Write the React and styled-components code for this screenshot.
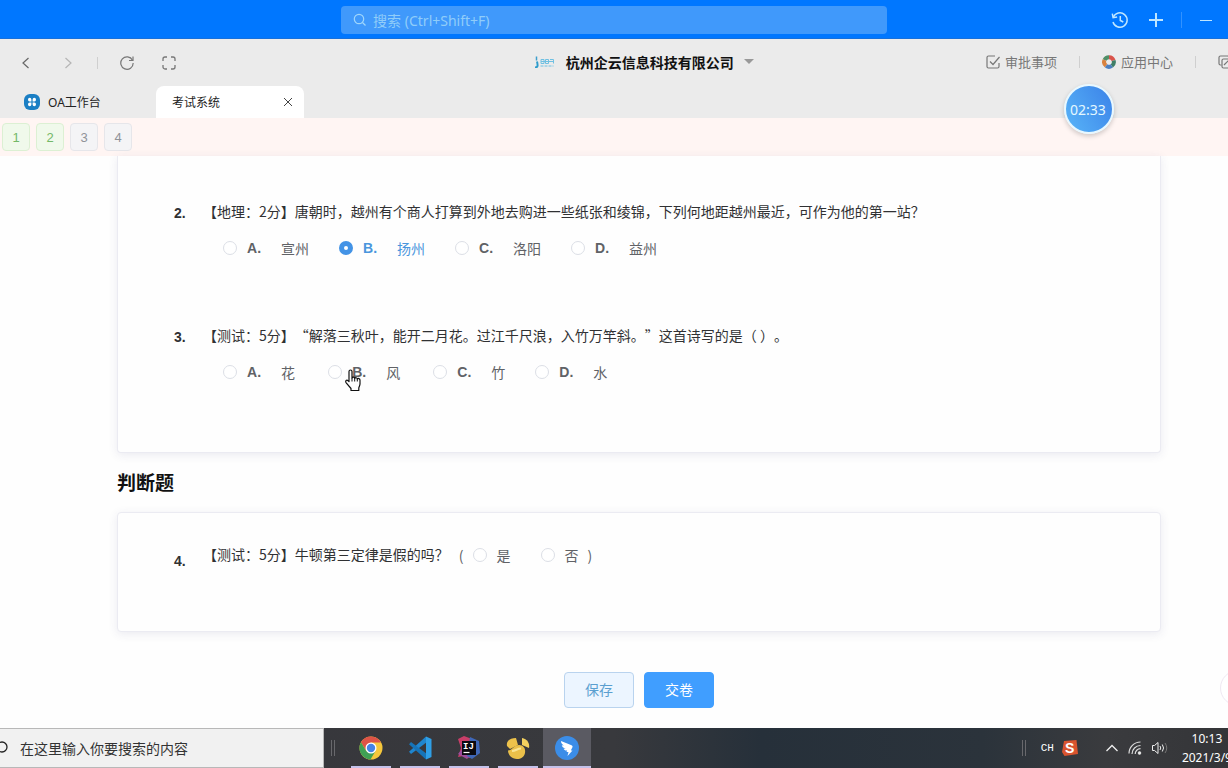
import React, { useState } from "react";
import styled, { createGlobalStyle } from "styled-components";

const singleQuestions = [
  {
    id: 2,
    title: "【地理：2分】唐朝时，越州有个商人打算到外地去购进一些纸张和绫锦，下列何地距越州最近，可作为他的第一站？",
    options: ["宣州", "扬州", "洛阳", "益州"],
  },
  {
    id: 3,
    title: "【测试：5分】“解落三秋叶，能开二月花。过江千尺浪，入竹万竿斜。”这首诗写的是（ ）。",
    options: ["花 ", "风 ", "竹", "水"],
    pointer: 1,
  },
];

const judgeQuestion = {
  id: 4,
  title: "【测试：5分】牛顿第三定律是假的吗？",
  options: ["是", "否"],
};

const letters = ["A", "B", "C", "D"];

const HandPointer = () => (
  <Pointer width="18" height="24" viewBox="0 0 18 24" aria-hidden="true">
    <path
      d="M5 2.500c0-2 3-2 3 0V9c.4-1.300 2.700-1 2.700.4.500-1.200 2.600-.8 2.600.6.700-1 2.700-.5 2.700 1.200V15c0 1.500-1 2.500-1.200 4v2.500H7V19.500L2 13.600c-1-1.700.6-3.100 2-1.900l1 1z"
      fill="#fff"
      stroke="#111"
      strokeWidth="1.200"
      strokeLinejoin="round"
    />
    <path d="M8 9v3.500M10.700 9.500v3M13.300 10v2.500" stroke="#111" />
  </Pointer>
);

const Chrome = () => (
  <svg width="24" height="24" viewBox="0 0 24 24">
    <circle cx="12" cy="12" r="11.500" fill="#f5c73c" />
    <path d="M2 6.200A11.500 11.500 0 0 1 22 6.500H12L7 14.500z" fill="#dd5347" />
    <path d="M2 6.200 7.200 15 12 17.300 16.500 15 11.500 23.500A11.500 11.500 0 0 1 2 6.200z" fill="#3fa055" />
    <circle cx="12" cy="12" r="5.500" fill="#fff" />
    <circle cx="12" cy="12" r="4.200" fill="#4583e6" />
  </svg>
);

const VsCode = () => (
  <svg width="24" height="24" viewBox="0 0 24 24">
    <path d="M18 .5 23.500 3v18L18 23.500z" fill="#2f9fe6" />
    <path d="M18 .5 1 15.800l2 2.200L18 6.800z" fill="#1f86cf" />
    <path d="M18 23.500 1 8.200 3 6l15 11.200z" fill="#1674b8" />
  </svg>
);

const Idea = () => (
  <svg width="24" height="24" viewBox="0 0 24 24">
    <path d="M1 3 7 0l8 3-2 19-7-2-5 1 3-9z" fill="#c93e68" />
    <path d="M1 18l5-6 7 8-3 3z" fill="#9a4c9c" />
    <path d="M13 1l9 4 1 12-8 6-5-3z" fill="#3f67b8" />
    <rect x="5" y="5" width="14" height="14" fill="#0b0a10" />
    <text x="6" y="13" fill="#fff" fontSize="9" fontWeight="700" fontFamily="Liberation Mono, monospace">
      IJ
    </text>
    <path d="M6.500 16.500h6" stroke="#fff" strokeWidth="1.200" />
  </svg>
);

const Navicat = () => (
  <svg width="24" height="24" viewBox="0 0 24 24">
    <path d="M1 10C0 5 4 2 10 2l2 7-8 4z" fill="#edc24b" />
    <path d="M16 2c5 1 8 5 7 10l-7-3z" fill="#f4d25f" />
    <path d="M2 14.500c4 0 6-5.500 11-5.500 4 0 7 3 6 8-1 4-4 6-8 6-5 0-9-4-9-8.500z" fill="#eac04a" />
    <path d="M6 15c4 0 5-2.500 9-2.500" stroke="#fae594" strokeWidth="2" fill="none" />
  </svg>
);

const DingTalk = () => (
  <svg width="24" height="24" viewBox="0 0 24 24">
    <circle cx="12" cy="12" r="12" fill="#3b8de8" />
    <path d="M6 5l10.500 4.200c1.200.5 1.300 1.400.8 2.400l-1.500 3h1.700L12.500 20l1-4h-2l.7-1.500c-2 .2-3-.5-3.600-1.800l2.100-.1C8.300 11.800 7 10.700 6.800 9.300l2 .2C7 8.300 6 7 6 5z" fill="#fff" />
  </svg>
);

const tasks = [
  { name: "Chrome", Icon: Chrome },
  { name: "Code", Icon: VsCode },
  { name: "IDEA", Icon: Idea },
  { name: "Navicat", Icon: Navicat },
  { name: "DingTalk", Icon: DingTalk, active: true },
];

const App = () => {
  const [answers, setAnswers] = useState({ 2: 1 });

  const choose = (id, index) => setAnswers({ ...answers, [id]: index });

  return (
    <Page>
      <GlobalStyle />
      <TitleBar>
        <SearchBox>
          <svg width="14" height="14" viewBox="0 0 14 14" fill="none" stroke="currentColor" strokeWidth="1.200">
            <circle cx="6" cy="6" r="4.700" />
            <path d="M9.500 9.500l3 3" />
          </svg>
          <SearchInput aria-label="搜索" placeholder="搜索 (Ctrl+Shift+F)" />
        </SearchBox>
        <WindowActions>
          <IconButton aria-label="历史">
            <svg width="18" height="18" viewBox="0 0 18 18" fill="none" stroke="currentColor" strokeWidth="1.500">
              <path d="M2.300 6.300A7.200 7.200 0 1 1 2 11" />
              <path d="M1.300 2.700l.8 4 4-.6M9.300 5v4.500l3 1.500" />
            </svg>
          </IconButton>
          <IconButton aria-label="新建">
            <svg width="14" height="14" viewBox="0 0 14 14" stroke="currentColor" strokeWidth="2">
              <path d="M7 0v14M0 7h14" />
            </svg>
          </IconButton>
          <Divider $blue />
          <IconButton aria-label="最小化">
            <svg width="12" height="14" viewBox="0 0 12 14" stroke="currentColor">
              <path d="M0 7.500h12" />
            </svg>
          </IconButton>
        </WindowActions>
      </TitleBar>

      <Header>
        <Toolbar>
          <NavGroup>
            <IconButton aria-label="后退">
              <svg width="14" height="14" viewBox="0 0 14 14" fill="none" stroke="#666" strokeWidth="1.200">
                <path d="M9.500 2L4 7l5.500 5" />
              </svg>
            </IconButton>
            <IconButton aria-label="前进">
              <svg width="14" height="14" viewBox="0 0 14 14" fill="none" stroke="#b5b5b5" strokeWidth="1.200">
                <path d="M4.500 2L10 7l-5.500 5" />
              </svg>
            </IconButton>
            <Divider />
            <IconButton aria-label="刷新">
              <svg width="14" height="14" viewBox="0 0 14 14" fill="none" stroke="#777" strokeWidth="1.200">
                <path d="M12.500 4.200A6.200 6.200 0 1 0 13.200 7" />
                <path d="M13 .5v4H9" />
              </svg>
            </IconButton>
            <IconButton aria-label="全屏">
              <svg width="14" height="14" viewBox="0 0 14 14" fill="none" stroke="#777" strokeWidth="1.300">
                <path d="M1 5V3a2 2 0 0 1 2-2h2M9 1h2a2 2 0 0 1 2 2v2M13 9v2a2 2 0 0 1-2 2H9M5 13H3a2 2 0 0 1-2-2V9" />
              </svg>
            </IconButton>
          </NavGroup>
          <Company>
            <svg width="22" height="12" viewBox="0 0 22 12" fill="none" stroke="#6fc0e2">
              <path d="M2.500.5v4" stroke="#3c9fcc" strokeWidth="1.500" />
              <path d="M1 11.500c3 0 3-2 2-6" stroke="#2d9bcb" strokeWidth="2" />
              <path d="M7 3.500h3v4H7zM11.500 3.500h3v4h-3zM16 3.500h3.500v4M7 5.500h12.500" />
              <path d="M6.500 10h13" strokeDasharray="3 1" />
            </svg>
            杭州企云信息科技有限公司
            <svg width="10" height="6" viewBox="0 0 10 6">
              <path d="M0 0h10L5 5z" fill="#999" />
            </svg>
          </Company>
          <LinkGroup>
            <ToolLink href="#approve">
              <svg width="14" height="14" viewBox="0 0 14 14" fill="none" stroke="#777" strokeWidth="1.200">
                <path d="M9 1H2.500A1.500 1.500 0 0 0 1 2.500v9A1.500 1.500 0 0 0 2.500 13h9a1.500 1.500 0 0 0 1.500-1.500V8" />
                <path d="M4 6.500l3 3L13.500 2" />
              </svg>
              审批事项
            </ToolLink>
            <Divider />
            <ToolLink href="#apps">
              <svg width="14" height="14" viewBox="0 0 14 14" fill="none" strokeWidth="4">
                <path d="M2.500 5A4.800 4.800 0 0 1 7 2.200" stroke="#4f8f67" />
                <path d="M7 2.200A4.800 4.800 0 0 1 11.600 5.500" stroke="#d9534a" />
                <path d="M11.600 5.500A4.800 4.800 0 0 1 9.800 10.900" stroke="#3f7f68" />
                <path d="M9.800 10.900A4.800 4.800 0 0 1 4 10.700" stroke="#4c7fc0" />
                <path d="M4 10.700A4.800 4.800 0 0 1 2.500 5" stroke="#d9823f" />
              </svg>
              应用中心
            </ToolLink>
            <Divider />
            <ToolLink href="#more" aria-label="更多">
              <svg width="14" height="14" viewBox="0 0 14 14" fill="none" stroke="#777" strokeWidth="1.200">
                <path d="M3.500 10H2.500A1.500 1.500 0 0 1 1 8.500v-6A1.500 1.500 0 0 1 2.500 1h7A1.500 1.500 0 0 1 11 2.500" />
                <rect x="4" y="4" width="9" height="9" rx="1.500" />
                <path d="M6 10l5-5" />
              </svg>
            </ToolLink>
          </LinkGroup>
        </Toolbar>
        <Tabs>
          <Tab>
            <svg width="16" height="16" viewBox="0 0 16 16">
              <rect width="16" height="16" rx="6" fill="#1b7fc4" />
              <path d="M4 5.500a1.700 1.700 0 0 1 3.400 0v1.900H5.700A1.800 1.800 0 0 1 4 5.500zM12 5.500a1.700 1.700 0 0 0-3.400 0v1.900h1.700A1.800 1.800 0 0 0 12 5.500zM4 10.500a1.700 1.700 0 0 0 3.400 0V8.600H5.700A1.800 1.800 0 0 0 4 10.500zM12 10.500a1.700 1.700 0 0 1-3.400 0V8.600h1.700A1.800 1.800 0 0 1 12 10.500z" fill="#fff" />
            </svg>
            OA工作台
          </Tab>
          <Tab $active>
            考试系统
            <IconButton aria-label="关闭">
              <svg width="10" height="10" viewBox="0 0 10 10" stroke="#444">
                <path d="M1 1l8 8M9 1L1 9" />
              </svg>
            </IconButton>
          </Tab>
        </Tabs>
        <Timer>02:33</Timer>
      </Header>

      <AnswerCard>
        {[1, 2, 3, 4].map((n) => (
          <NumberButton key={n} $done={n < 3}>
            {n}
          </NumberButton>
        ))}
      </AnswerCard>

      <Content>
        <Card $continued>
          {singleQuestions.map((q) => (
            <Question key={q.id}>
              <Number>{q.id}.</Number>
              <div>
                <Title>{q.title}</Title>
                <Options>
                  {q.options.map((text, i) => (
                    <Option key={text} $checked={answers[q.id] === i}>
                      <Radio
                        type="radio"
                        name={`q${q.id}`}
                        checked={answers[q.id] === i}
                        onChange={() => choose(q.id, i)}
                      />
                      <Letter>{letters[i]}.</Letter>
                      {text}
                      {q.pointer === i && <HandPointer />}
                    </Option>
                  ))}
                </Options>
              </div>
            </Question>
          ))}
        </Card>
        <SectionTitle>判断题</SectionTitle>
        <Card>
          <Question>
            <Number $tall>{judgeQuestion.id}.</Number>
            <JudgeRow>
              <Title>{judgeQuestion.title}</Title>
              <Judge>
                <span>(</span>
                {judgeQuestion.options.map((text, i) => (
                  <Option key={text} $checked={answers[4] === i}>
                    <Radio type="radio" name="q4" checked={answers[4] === i} onChange={() => choose(4, i)} />
                    {text}
                  </Option>
                ))}
                <span>)</span>
              </Judge>
            </JudgeRow>
          </Question>
        </Card>
        <Actions>
          <Button>保存</Button>
          <Button $primary>交卷</Button>
        </Actions>
        <SideHandle aria-label="展开" />
      </Content>

      <Taskbar>
        <TaskSearch>
          <svg width="8" height="14" viewBox="0 0 8 14" fill="none" stroke="#222" strokeWidth="1.300">
            <circle cx="2" cy="6" r="5" />
          </svg>
          <TaskInput aria-label="任务栏搜索" placeholder="在这里输入你要搜索的内容" />
        </TaskSearch>
        <Grip />
        <TaskList>
          {tasks.map(({ name, Icon, active }) => (
            <TaskButton key={name} aria-label={name} $active={active}>
              <Icon />
            </TaskButton>
          ))}
        </TaskList>
        <Tray>
          <Grip />
          <InputMode>CH</InputMode>
          <svg width="16" height="16" viewBox="0 0 16 16">
            <path d="M2 1L14.500 0 16 14 2.500 16 0 12z" fill="#d9542f" />
            <text x="3" y="13" fill="#fff" fontSize="14" fontWeight="700" fontFamily="Liberation Sans, sans-serif">
              S
            </text>
          </svg>
          <TrayIcons>
            <svg width="12" height="8" viewBox="0 0 12 8" fill="none" stroke="#eee" strokeWidth="1.300">
              <path d="M.5 7L6 1.500 11.500 7" />
            </svg>
            <svg width="14" height="14" viewBox="0 0 14 14" fill="none" stroke="#ddd" strokeWidth="1.200">
              <path d="M1 12.500A11.500 11.500 0 0 1 12.500 1M4 13a8.500 8.500 0 0 1 8.500-8.500M7.200 13a5.300 5.300 0 0 1 5.300-5.300" />
              <circle cx="11.500" cy="12" r="1.200" fill="#fff" />
            </svg>
            <svg width="16" height="14" viewBox="0 0 16 14" fill="none" stroke="#eee">
              <path d="M.5 4.500h2L6 1.500v11L2.500 9.500h-2z" />
              <path d="M8 5q1.500 2 0 4M10.300 3.500q2.500 3.500 0 7" />
              <path d="M13 2q3.500 5 0 10" stroke="#777" />
            </svg>
          </TrayIcons>
          <Clock>
            <span>10:13</span>
            <span>2021/3/9</span>
          </Clock>
        </Tray>
      </Taskbar>
    </Page>
  );
};

const GlobalStyle = createGlobalStyle`
  * {
    box-sizing: border-box;
  }

  body {
    margin: 0;
    overflow: hidden;
    background: #fefefe;
    font-family: "Noto Sans CJK SC", sans-serif;
    font-size: 14px;
    color: #303133;
    text-spacing-trim: space-all;
  }

  button, input {
    font-family: inherit;
  }

  svg {
    flex-shrink: 0;
  }
`;

const Page = styled.div`
  display: flex;
  flex-direction: column;
  min-height: 100vh;
  overflow: hidden;
`;

const TitleBar = styled.header`
  display: grid;
  grid-template-columns: 5fr 8fr 5fr;
  align-items: center;
  height: 39px;
  padding-top: 2px;
  background: #0077ff;
  border-bottom: 1px solid #1670dc;
  color: #bfe6ff;
`;

const SearchBox = styled.div`
  grid-column: 2;
  display: flex;
  align-items: center;
  gap: 6px;
  height: 28px;
  padding: 0 12px;
  border-radius: 4px;
  background: #4099fb;
  color: #9fd6fb;
`;

const SearchInput = styled.input`
  flex: 1;
  padding: 0;
  border: none;
  outline: none;
  background: transparent;
  font-family: "Noto Sans", "Noto Sans CJK SC", sans-serif;
  font-size: 14px;
  color: #fff;

  &::placeholder {
    color: #90cdf9;
    opacity: 1;
  }
`;

const WindowActions = styled.div`
  display: flex;
  align-items: center;
  justify-content: flex-end;
  gap: 20px;
  padding-right: 16px;
`;

const IconButton = styled.button`
  display: flex;
  padding: 0;
  border: none;
  background: none;
  color: inherit;
  cursor: pointer;
`;

const Divider = styled.span`
  width: 1px;
  height: ${(props) => (props.$blue ? "16px" : "12px")};
  margin: ${(props) => (props.$blue ? "0 -2px" : 0)};
  background: ${(props) => (props.$blue ? "#3292ff" : "#cfcfcf")};
`;

const Header = styled.div`
  position: relative;
  background: #ebebeb;
`;

const Toolbar = styled.div`
  display: grid;
  grid-template-columns: 9fr auto 8fr;
  align-items: center;
  height: 47px;
`;

const NavGroup = styled.nav`
  display: flex;
  align-items: center;
  gap: 28px;
  padding-left: 19px;

  ${Divider} {
    margin: 0 -6px;
  }
`;

const Company = styled.div`
  display: flex;
  align-items: center;
  gap: 10px;
  padding-bottom: 2px;
  font-weight: 700;
  color: #111;
`;

const LinkGroup = styled.div`
  display: flex;
  align-items: center;
  justify-content: flex-end;
  gap: 22px;
  padding-bottom: 2px;
  margin-right: -4px;
`;

const ToolLink = styled.a`
  display: flex;
  align-items: center;
  gap: 5px;
  font-size: 13px;
  color: #777;
  text-decoration: none;
`;

const Tabs = styled.div`
  display: flex;
  padding-left: 8px;
`;

const Tab = styled.div`
  display: flex;
  align-items: center;
  justify-content: ${(props) => (props.$active ? "space-between" : "flex-start")};
  gap: 8px;
  width: 148px;
  height: 32px;
  padding: 0 11px 0 16px;
  border-radius: 8px 8px 0 0;
  background: ${(props) => (props.$active ? "#fff" : "transparent")};
  font-family: "Noto Sans", "Noto Sans CJK SC", sans-serif;
  font-size: 12px;
  color: #222;
`;

const Timer = styled.div`
  position: absolute;
  right: 114px;
  bottom: -16px;
  display: flex;
  align-items: center;
  justify-content: center;
  width: 50px;
  height: 50px;
  padding-right: 2px;
  border: 2px solid #e8f8ff;
  border-radius: 50%;
  background: linear-gradient(60deg, #58b4f8, #3b82e8);
  box-shadow: 0 2px 5px rgba(0, 0, 0, 0.2);
  font-family: "Noto Sans", sans-serif;
  color: #e4f8ff;
`;

const AnswerCard = styled.div`
  display: flex;
  align-items: center;
  gap: 6px;
  height: 38px;
  padding-left: 2px;
  background: #fff5f3;
`;

const NumberButton = styled.button`
  width: 28px;
  height: 28px;
  padding: 0;
  border: 1px solid ${(props) => (props.$done ? "#dcf0d3" : "#e6e6ea")};
  border-radius: 4px;
  background: ${(props) => (props.$done ? "#f0f9eb" : "#f4f4f6")};
  font-family: "Liberation Sans", sans-serif;
  font-size: 13px;
  color: ${(props) => (props.$done ? "#74b868" : "#909399")};
`;

const Content = styled.main`
  position: relative;
  flex: 1;
  padding: 0 67px 20px 117px;
`;

const Card = styled.section`
  padding: ${(props) => (props.$continued ? "44px 56px 68px" : "30px 56px 52px")};
  border: 1px solid #ebebf2;
  border-top-width: ${(props) => (props.$continued ? 0 : "1px")};
  border-radius: ${(props) => (props.$continued ? "0 0 4px 4px" : "4px")};
  background: #fefefe;
  box-shadow: 0 2px 10px rgba(60, 60, 120, 0.1);
`;

const Question = styled.div`
  display: flex;

  & + & {
    margin-top: 64px;
  }
`;

const Number = styled.span`
  width: 29px;
  font-family: "Liberation Sans", sans-serif;
  font-weight: 700;
  line-height: ${(props) => (props.$tall ? "36px" : "26px")};
`;

const Title = styled.div`
  line-height: 22px;
`;

const Options = styled.div`
  display: flex;
  gap: 30px;
  margin: 14px 0 0 20px;
`;

const Option = styled.label`
  position: relative;
  display: flex;
  align-items: center;
  height: 24px;
  white-space: pre;
  color: ${(props) => (props.$checked ? "#4a96dd" : "#606266")};
  cursor: pointer;
`;

const Radio = styled.input`
  appearance: none;
  width: 14px;
  height: 14px;
  margin: 0 10px 0 0;
  border: 1px solid #dcdfe6;
  border-radius: 50%;
  background: #fff;

  &:checked {
    border: 5px solid #4393e6;
  }
`;

const Letter = styled.b`
  margin-right: 20px;
  font-family: "Liberation Sans", sans-serif;
`;

const Pointer = styled.svg`
  position: absolute;
  top: 9px;
  left: 16px;
`;

const JudgeRow = styled.div`
  display: flex;
  gap: 10px;
`;

const Judge = styled.div`
  display: flex;
  align-items: center;
  gap: 9px;
  height: 24px;
  color: #606266;

  ${Option} + ${Option} {
    margin-left: 21px;
  }
`;

const SectionTitle = styled.h3`
  margin: 15px 0 16px;
  font-size: 19px;
  line-height: 28px;
  color: #111;
`;

const Actions = styled.div`
  display: flex;
  justify-content: center;
  gap: 10px;
  margin-top: 40px;
`;

const Button = styled.button`
  width: 70px;
  height: 36px;
  padding: 0 0 2px;
  border: 1px solid ${(props) => (props.$primary ? "#409eff" : "#b9d3ee")};
  border-radius: 4px;
  background: ${(props) => (props.$primary ? "#409eff" : "#ecf5ff")};
  font-size: 14px;
  color: ${(props) => (props.$primary ? "#fff" : "#5b9fd0")};
  cursor: pointer;
`;

const SideHandle = styled.button`
  position: absolute;
  right: -28px;
  bottom: 22px;
  width: 36px;
  height: 36px;
  border: 1px solid #efe8f2;
  border-radius: 50%;
  background: #fff;
`;

const Taskbar = styled.footer`
  display: flex;
  align-items: center;
  height: 40px;
  background: linear-gradient(90deg, #36363b 0%, #38393d 50%, #26303a 62%, #2b333b 80%, #3a3b3e 90%, #343538 100%);
  color: #fff;
`;

const TaskSearch = styled.div`
  display: flex;
  align-items: center;
  gap: 12px;
  width: 324px;
  height: 40px;
  border: 1px solid #b8b8b8;
  border-left: none;
  background: #f1f1f1;
`;

const TaskInput = styled.input`
  flex: 1;
  padding: 0;
  border: none;
  outline: none;
  background: transparent;
  font-size: 14px;

  &::placeholder {
    color: #333;
    opacity: 1;
  }
`;

const Grip = styled.span`
  width: 4px;
  height: 16px;
  margin: 0 7px;
  border: solid #68686c;
  border-width: 0 1px;
`;

const TaskList = styled.div`
  display: flex;
  gap: 1px;
  margin-left: 5px;
`;

const TaskButton = styled.button`
  display: flex;
  align-items: center;
  justify-content: center;
  width: 48px;
  height: 40px;
  padding: 0;
  border: none;
  background:
    linear-gradient(#c4c1ea, #c4c1ea) center bottom / ${(props) => (props.$active ? "48px" : "40px")} 2px no-repeat
    ${(props) => (props.$active ? "#5a5a62" : "transparent")};
`;

const Tray = styled.div`
  display: flex;
  align-items: center;
  gap: 8px;
  margin: 0 -4px 0 auto;
`;

const InputMode = styled.span`
  font-family: "Liberation Mono", monospace;
  font-size: 11px;
`;

const TrayIcons = styled.div`
  display: flex;
  align-items: center;
  gap: 10px;
  margin: 0 6px 0 20px;
`;

const Clock = styled.div`
  display: flex;
  flex-direction: column;
  align-items: center;
  font-family: "Noto Sans", sans-serif;
  font-size: 12px;
  line-height: 19px;
`;

export default App;
